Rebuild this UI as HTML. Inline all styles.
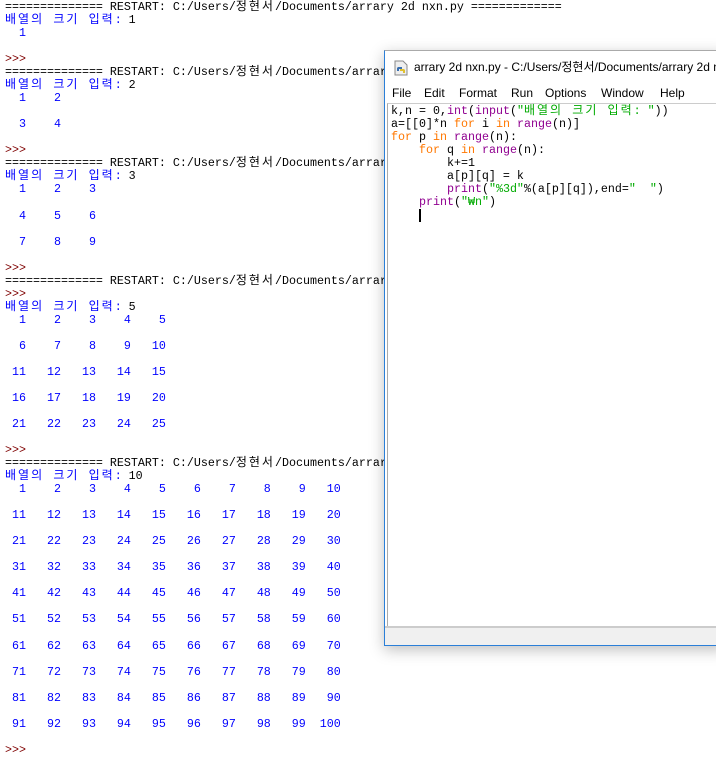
<!DOCTYPE html>
<html><head><meta charset="utf-8"><style>
body{margin:0;width:716px;height:758px;overflow:hidden;background:#fff;position:relative;}
pre{margin:0;font-family:"Liberation Mono","Noto Sans CJK KR","NanumGothic",monospace;font-size:11.67px;line-height:13.03px;white-space:pre;}
.h{font-size:12px;letter-spacing:2px;}
#shell{position:absolute;left:5px;top:1px;color:#000;}
.b{color:#0000ff}.r{color:#7f0000}
#win{position:absolute;left:384px;top:50px;width:340px;height:594px;border-left:1px solid #2b7fd8;border-bottom:1px solid #2b7fd8;border-top:1px solid #aaa;background:#fff;box-shadow:0 4px 14px rgba(0,0,0,.25);}
#title{position:absolute;left:0;top:0;height:33px;width:100%;font-family:"Liberation Sans","Noto Sans CJK KR",sans-serif;font-size:12px;line-height:33px;color:#000;white-space:nowrap;overflow:hidden;}
#menu{position:absolute;left:0;top:33px;height:19px;width:100%;font-family:"Liberation Sans",sans-serif;font-size:12px;line-height:19px;}
#menu span{position:absolute;top:0}
#text{position:absolute;left:2px;top:52px;right:0;height:523px;border-top:1px solid #ccc;border-left:1px solid #aaa;}
#status{position:absolute;left:0;right:0;bottom:0;height:17px;background:#f0f0f0;border-top:2px solid #ccc;}
#code{position:absolute;left:3px;top:1px;}
.k{color:#ff7700}.p{color:#900090}.g{color:#00aa00}
</style></head><body>
<pre id="shell">============== RESTART: C:/Users/<span class="h">정현서</span>/Documents/arrary 2d nxn.py =============
<span class="b"><span class="h">배열의 크기 입력</span>:</span> 1
<span class="b">  1  </span>

<span class="r">&gt;&gt;&gt;</span>
============== RESTART: C:/Users/<span class="h">정현서</span>/Documents/arrary 2d nxn.py =============
<span class="b"><span class="h">배열의 크기 입력</span>:</span> 2
<span class="b">  1    2  </span>

<span class="b">  3    4  </span>

<span class="r">&gt;&gt;&gt;</span>
============== RESTART: C:/Users/<span class="h">정현서</span>/Documents/arrary 2d nxn.py =============
<span class="b"><span class="h">배열의 크기 입력</span>:</span> 3
<span class="b">  1    2    3  </span>

<span class="b">  4    5    6  </span>

<span class="b">  7    8    9  </span>

<span class="r">&gt;&gt;&gt;</span>
============== RESTART: C:/Users/<span class="h">정현서</span>/Documents/arrary 2d nxn.py =============
<span class="r">&gt;&gt;&gt;</span>
<span class="b"><span class="h">배열의 크기 입력</span>:</span> 5
<span class="b">  1    2    3    4    5  </span>

<span class="b">  6    7    8    9   10  </span>

<span class="b"> 11   12   13   14   15  </span>

<span class="b"> 16   17   18   19   20  </span>

<span class="b"> 21   22   23   24   25  </span>

<span class="r">&gt;&gt;&gt;</span>
============== RESTART: C:/Users/<span class="h">정현서</span>/Documents/arrary 2d nxn.py =============
<span class="b"><span class="h">배열의 크기 입력</span>:</span> 10
<span class="b">  1    2    3    4    5    6    7    8    9   10  </span>

<span class="b"> 11   12   13   14   15   16   17   18   19   20  </span>

<span class="b"> 21   22   23   24   25   26   27   28   29   30  </span>

<span class="b"> 31   32   33   34   35   36   37   38   39   40  </span>

<span class="b"> 41   42   43   44   45   46   47   48   49   50  </span>

<span class="b"> 51   52   53   54   55   56   57   58   59   60  </span>

<span class="b"> 61   62   63   64   65   66   67   68   69   70  </span>

<span class="b"> 71   72   73   74   75   76   77   78   79   80  </span>

<span class="b"> 81   82   83   84   85   86   87   88   89   90  </span>

<span class="b"> 91   92   93   94   95   96   97   98   99  100  </span>

<span class="r">&gt;&gt;&gt;</span></pre>
<div id="win">
 <div id="title"><svg style="position:absolute;left:8px;top:9px" width="16" height="16" viewBox="0 0 16 16"><path d="M2 1h8l4 4v10H2z" fill="#eee" stroke="#888"/><path d="M5 7h4v2H6v2H4V8z" fill="#3a6fb0"/><path d="M11 9H7v2h3v2h2v-3z" fill="#e0c030"/></svg><span style="position:absolute;left:29px">arrary 2d nxn.py - C:/Users/정현서/Documents/arrary 2d nxn.py (3.6.4)</span></div>
 <div id="menu"><span style="left:7px">File</span><span style="left:39px">Edit</span><span style="left:74px">Format</span><span style="left:126px">Run</span><span style="left:160px">Options</span><span style="left:216px">Window</span><span style="left:275px">Help</span></div>
 <div id="text"><pre id="code">k,n = 0,<span class="p">int</span>(<span class="p">input</span>(<span class="g">"<span class="h">배열의 크기 입력</span>: "</span>))
a=[[0]*n <span class="k">for</span> i <span class="k">in</span> <span class="p">range</span>(n)]
<span class="k">for</span> p <span class="k">in</span> <span class="p">range</span>(n):
    <span class="k">for</span> q <span class="k">in</span> <span class="p">range</span>(n):
        k+=1
        a[p][q] = k
        <span class="p">print</span>(<span class="g">"%3d"</span>%(a[p][q]),end=<span class="g">"  "</span>)
    <span class="p">print</span>(<span class="g">"₩n"</span>)
    <span style="display:inline-block;width:2px;height:13px;background:#000;vertical-align:middle"></span></pre></div>
 <div id="status"></div>
</div>
</body></html>
